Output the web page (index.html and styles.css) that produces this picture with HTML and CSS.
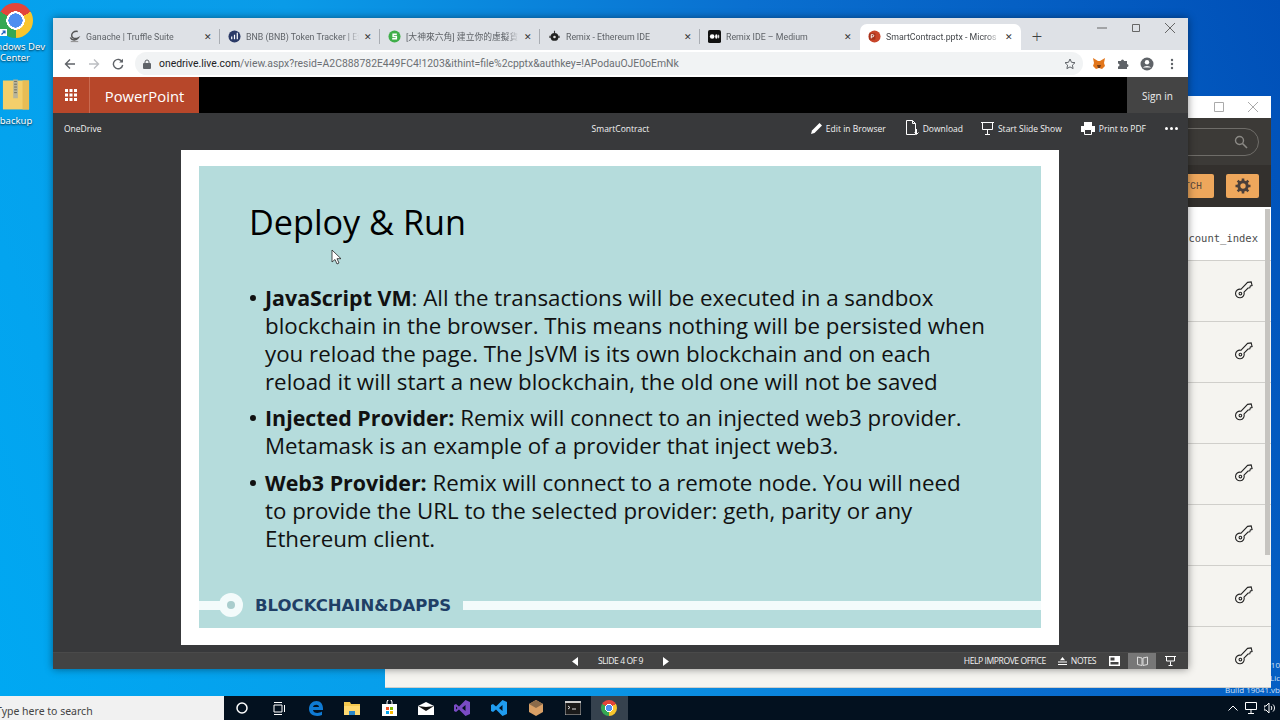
FILE: index.html
```html
<!DOCTYPE html>
<html>
<head>
    <title>SmartContract.pptx - Microsoft PowerPoint Online</title>
    <meta charset="utf-8">
    <link rel="stylesheet" href="styles.css">
</head>
<body>
    <div class="desktop">
        <div class="desk-icon chrome-desk">
            <div class="chrome-logo big"></div>
            <svg class="shortcut" width="7" height="7" viewBox="0 0 7 7"><path d="M0 0h7v7H0z" fill="#fff"/><path d="M1.500 5.500L5 2M2.500 2H5v2.500" fill="none" stroke="#1b5fc0" stroke-width="1.200"/></svg>
            <span>Windows Dev<br>Center</span>
        </div>
        <div class="desk-icon zip-desk">
            <svg width="28" height="33" viewBox="0 0 30 34"><path d="M1 2h28v31H1z" fill="#f3cf6b"/><path d="M22 2h7v31h-7z" fill="#e8bd55"/><path d="M12 1h5v20h-5z" fill="#b8b49a"/><path d="M13 3h3M13 6h3M13 9h3M13 12h3M13 15h3" stroke="#6f6a55"/></svg>
            <span>backup</span>
        </div>
        <div class="build-note"><span>10</span><span>Lic</span><span>Build 19041.vb</span></div>

        <div class="back-window">
            <div class="back-title">
                <svg width="10" height="10" viewBox="0 0 10 10"><path d="M.5.5h9v9h-9z" fill="none" stroke="#aaa"/></svg>
                <svg width="10" height="10" viewBox="0 0 10 10"><path d="M0 0l10 10M10 0L0 10" stroke="#aaa"/></svg>
            </div>
            <div class="back-search">
                <div class="search-pill">
                    <svg width="14" height="14" viewBox="0 0 14 14"><circle cx="5.5" cy="5.5" r="4" fill="none" stroke="#8b8985" stroke-width="1.4"/><path d="M8.5 8.5L13 13" stroke="#8b8985" stroke-width="1.6"/></svg>
                </div>
            </div>
            <div class="back-actions">
                <div class="orange-btn switch-btn">SWITCH</div>
                <div class="orange-btn gear-btn">
                    <svg width="16" height="16" viewBox="0 0 16 16"><circle cx="8" cy="8" r="4.2" fill="none" stroke="#4a3f3a" stroke-width="3"/><path d="M8 .5v3M8 12.5v3M.5 8h3M12.5 8h3M2.7 2.7l2.1 2.1M11.2 11.2l2.1 2.1M13.3 2.7l-2.1 2.1M4.8 11.2l-2.1 2.1" stroke="#4a3f3a" stroke-width="2.6"/></svg>
                </div>
            </div>
            <div class="account-list">
                <div class="account-head">account_index</div>
                <div class="account-row"><svg class="key"><use href="#key"/></svg></div>
                <div class="account-row"><svg class="key"><use href="#key"/></svg></div>
                <div class="account-row"><svg class="key"><use href="#key"/></svg></div>
                <div class="account-row"><svg class="key"><use href="#key"/></svg></div>
                <div class="account-row"><svg class="key"><use href="#key"/></svg></div>
                <div class="account-row"><svg class="key"><use href="#key"/></svg></div>
                <div class="account-row"><svg class="key"><use href="#key"/></svg></div>
                <div class="scroll-thumb"></div>
            </div>
        </div>

        <div class="browser">
            <div class="tabstrip">
                <div class="tab">
                    <svg class="fav" viewBox="0 0 14 14"><path d="M10.500 1.500C6 1 3.500 3.500 4 6.500c.5 2.500 4 3.500 7 2-2 3-7 3-8.500-.5" fill="none" stroke="#555" stroke-width="1.600"/><path d="M3 12.500h8" stroke="#888"/></svg>
                    <span class="tab-name">Ganache | Truffle Suite</span><span class="tab-x">✕</span>
                </div>
                <div class="tab">
                    <svg class="fav" viewBox="0 0 14 14"><circle cx="7" cy="7" r="6.500" fill="#2b3a67"/><path d="M4 10V7M7 10V5M10 10V3" fill="none" stroke="#fff" stroke-width="1.300"/></svg>
                    <span class="tab-name">BNB (BNB) Token Tracker | Et</span><span class="tab-x">✕</span>
                </div>
                <div class="tab">
                    <svg class="fav" viewBox="0 0 14 14"><circle cx="7" cy="7" r="6.500" fill="#3fae49"/><path d="M9.500 4.500H5.500v2.500h3.500v2.500H4.500" fill="none" stroke="#fff" stroke-width="1.600"/></svg>
                    <span class="tab-name cjk">[大神來六角] 建立你的虛擬貨</span><span class="tab-x">✕</span>
                </div>
                <div class="tab">
                    <svg class="fav" viewBox="0 0 14 14"><circle cx="7" cy="7.500" r="4.200" fill="#222"/><path d="M1.500 7.500h1.500M11 7.500h1.500" stroke="#333" stroke-width="2.400"/><path d="M7 .8v2.500" stroke="#333" stroke-width="1.200"/><circle cx="7" cy="7.500" r="1.400" fill="#ddd"/></svg>
                    <span class="tab-name">Remix - Ethereum IDE</span><span class="tab-x">✕</span>
                </div>
                <div class="tab">
                    <svg class="fav" viewBox="0 0 14 14"><rect width="14" height="14" rx="2" fill="#111"/><circle cx="4.500" cy="7" r="2.500" fill="#fff"/><ellipse cx="9" cy="7" rx="1.300" ry="2.400" fill="#fff"/><ellipse cx="11.500" cy="7" rx=".6" ry="2.100" fill="#fff"/></svg>
                    <span class="tab-name">Remix IDE – Medium</span><span class="tab-x">✕</span>
                </div>
                <div class="tab active">
                    <svg class="fav" viewBox="0 0 14 14"><circle cx="7" cy="7" r="6.500" fill="#c8452a"/><rect x="1" y="3.500" width="7" height="7" rx="1" fill="#a5311a"/><path d="M3.500 9V5h1.500a1.200 1.200 0 0 1 0 2.400H3.500" fill="none" stroke="#fff"/></svg>
                    <span class="tab-name">SmartContract.pptx - Micros</span><span class="tab-x">✕</span>
                </div>
                <div class="new-tab">+</div>
                <div class="win-controls">
                    <svg width="10" height="10" viewBox="0 0 10 10"><path d="M0 5h10" stroke="#666"/></svg>
                    <svg width="10" height="10" viewBox="0 0 10 10"><path d="M1.500 1.500h7v7h-7z" fill="none" stroke="#666"/></svg>
                    <svg width="10" height="10" viewBox="0 0 10 10"><path d="M0 0l10 10M10 0L0 10" stroke="#666"/></svg>
                </div>
            </div>

            <div class="toolbar">
                <svg class="nav" viewBox="0 0 12 12"><path d="M11 6H1.500M6 1.500L1.500 6 6 10.500" fill="none" stroke="#5f6368" stroke-width="1.400"/></svg>
                <svg class="nav" viewBox="0 0 12 12"><path d="M1 6h9.500M6 1.500L10.500 6 6 10.500" fill="none" stroke="#bcbec2" stroke-width="1.400"/></svg>
                <svg class="nav" viewBox="0 0 12 12"><path d="M10.300 4A4.700 4.700 0 1 0 10.700 7" fill="none" stroke="#5f6368" stroke-width="1.400"/><path d="M11 .8V4.600H7.200z" fill="#5f6368"/></svg>
                <div class="omnibox">
                    <svg width="8" height="10" viewBox="0 0 8 10"><rect y="4" width="8" height="6" rx="1" fill="#5f6368"/><path d="M2 4.500V3a2 2 0 0 1 4 0v1.500" fill="none" stroke="#5f6368"/></svg>
                    <span class="url"><b>onedrive.live.com</b>/view.aspx?resid=A2C888782E449FC4!1203&amp;ithint=file%2cpptx&amp;authkey=!APodauOJE0oEmNk</span>
                    <svg class="star" width="12" height="12" viewBox="0 0 12 12"><path d="M6 1l1.500 3.300 3.500.4-2.600 2.400.7 3.500L6 8.900l-3.100 1.700.7-3.500L1 4.700l3.500-.4z" fill="none" stroke="#5f6368"/></svg>
                </div>
                <div class="ext-icons">
                    <svg width="14" height="14" viewBox="0 0 14 14"><path d="M1 1l5 3h2l5-3-1 5 1 3-3 3-3-1-3 1-3-3 1-3z" fill="#e2761b"/><path d="M5 8h4l-1 3H6z" fill="#763d16"/></svg>
                    <svg width="12" height="12" viewBox="0 0 12 12"><path d="M1 3h3a1.500 1.500 0 0 1 3 0h3v3a1.500 1.500 0 0 1 0 3v2H1V8.500a1.500 1.500 0 0 0 0-3z" fill="#5f6368"/></svg>
                    <svg width="14" height="14" viewBox="0 0 14 14"><circle cx="7" cy="7" r="6.500" fill="#5f6368"/><circle cx="7" cy="5.200" r="2.200" fill="#fff"/><path d="M2.800 10.500a5 3.500 0 0 1 8.400 0z" fill="#fff"/></svg>
                    <svg class="ext-menu" width="4" height="12" viewBox="0 0 4 12"><circle cx="2" cy="2" r="1.200" fill="#5f6368"/><circle cx="2" cy="6" r="1.200" fill="#5f6368"/><circle cx="2" cy="10" r="1.200" fill="#5f6368"/></svg>
                </div>
            </div>

            <div class="app-bar">
                <div class="brand">
                    <div class="waffle">
                        <svg width="12" height="12" viewBox="0 0 12 12"><path fill="#fff" d="M0 0h3v3H0zM4.500 0h3v3h-3zM9 0h3v3H9zM0 4.500h3v3H0zM4.500 4.500h3v3h-3zM9 4.500h3v3H9zM0 9h3v3H0zM4.500 9h3v3h-3zM9 9h3v3H9z"/></svg>
                    </div>
                    <div class="brand-name">PowerPoint</div>
                </div>
                <div class="sign-in">Sign in</div>
            </div>

            <div class="command-bar">
                <div class="cmd-left">OneDrive</div>
                <div class="cmd-title">SmartContract</div>
                <div class="cmd-right">
                    <span class="cmd edit"><svg width="11" height="11" viewBox="0 0 11 11"><path d="M0 11l1-3.500L8.500 0 11 2.500 3.500 10z" fill="#fff"/></svg>Edit in Browser</span>
                    <span class="cmd dl"><svg width="13" height="16" viewBox="0 0 13 16"><path d="M.5.5h6l3 3v11h-9zM6.500.5v3h3" fill="none" stroke="#fff"/><path d="M10.500 9v5M8.500 12.500l2 2 2-2" fill="none" stroke="#fff"/></svg>Download</span>
                    <span class="cmd show"><svg width="13" height="13" viewBox="0 0 13 13"><path d="M0 .5h13M1.500 1v6.500h10V1M6.500 8v4M4 12.500h5" fill="none" stroke="#fff"/></svg>Start Slide Show</span>
                    <span class="cmd pdf"><svg width="14" height="13" viewBox="0 0 14 13"><path d="M3 0h8v4H3zM0 4h14v6H0z" fill="#fff"/><path d="M3.500 7.500h7v5h-7z" fill="#38393b" stroke="#fff"/></svg>Print to PDF</span>
                    <span class="dots"><i></i><i></i><i></i></span>
                </div>
            </div>

            <div class="stage">
                <div class="slide">
                    <div class="slide-inner">
                        <h1>Deploy &amp; Run</h1>
                        <ul>
                            <li><b>JavaScript VM</b>: All the transactions will be executed in a sandbox<br>blockchain in the browser. This means nothing will be persisted when<br>you reload the page. The JsVM is its own blockchain and on each<br>reload it will start a new blockchain, the old one will not be saved</li>
                            <li><b>Injected Provider:</b> Remix will connect to an injected web3 provider.<br>Metamask is an example of a provider that inject web3.</li>
                            <li><b>Web3 Provider:</b> Remix will connect to a remote node. You will need<br>to provide the URL to the selected provider: geth, parity or any<br>Ethereum client.</li>
                        </ul>
                        <div class="slide-foot">
                            <div class="foot-line short"></div>
                            <div class="foot-dot"><i></i></div>
                            <div class="foot-name">BLOCKCHAIN&amp;DAPPS</div>
                            <div class="foot-line long"></div>
                        </div>
                    </div>
                </div>
                <svg class="cursor" width="11" height="16" viewBox="0 0 11 16"><path d="M1 1v12l3-2.500 2 4.500 2-1-2-4.300h4z" fill="#fff" stroke="#222" stroke-width=".8"/></svg>
            </div>

            <div class="status-bar">
                <div></div>
                <div class="pager">
                    <svg width="6" height="9" viewBox="0 0 6 9"><path d="M6 0v9L0 4.500z" fill="#fff"/></svg>
                    <span>SLIDE 4 OF 9</span>
                    <svg width="6" height="9" viewBox="0 0 6 9"><path d="M0 0v9l6-4.500z" fill="#fff"/></svg>
                </div>
                <div class="status-right">
                    <span class="help">HELP IMPROVE OFFICE</span>
                    <svg class="notes-ico" width="9" height="9" viewBox="0 0 9 9"><path d="M4.500 0L7 3.200H2z" fill="#fff"/><path d="M0 5h9M0 7.500h9" stroke="#fff"/></svg>
                    <span class="notes">NOTES</span>
                    <span class="view"><svg width="11" height="10" viewBox="0 0 11 10"><path d="M0 0h11v10H0z" fill="#fff"/><path d="M1.500 1.500h4v3h-4zM1.500 6h8v2.500h-8z" fill="#434343"/></svg></span>
                    <span class="view on"><svg width="11" height="10" viewBox="0 0 11 10"><path d="M.5 1l4.500 1v7.500L.5 8.500zM10.500 1L6 2v7.500l4.500-1z" fill="none" stroke="#ddd"/></svg></span>
                    <span class="view"><svg width="11" height="10" viewBox="0 0 11 10"><path d="M0 .5h11M1.500 1v4h8V1M5.500 5.500v3.500M3.500 9.500h4" fill="none" stroke="#fff"/></svg></span>
                </div>
            </div>
        </div>
    </div>

    <div class="taskbar">
        <div class="task-search">Type here to search</div>
        <div class="task-icons">
            <span class="task-ico"><svg width="12" height="12" viewBox="0 0 12 12"><circle cx="6" cy="6" r="5" fill="none" stroke="#fff" stroke-width="1.500"/></svg></span>
            <span class="task-ico"><svg width="13" height="13" viewBox="0 0 13 13"><path d="M1 .5h8M1 12.500h8M1 3h8v7H1zM11.500 3v7" fill="none" stroke="#fff"/></svg></span>
            <span class="task-ico"><svg width="16" height="16" viewBox="0 0 16 16"><path d="M15 10H5c.3 3 5 4 9 1.500V15c-6 2.500-13 0-13-6 0-5 3.500-8 7.500-8S15 4 15 8.500zM5 7h6c0-3-5.500-3-6 0z" fill="#0f7bd4" fill-rule="evenodd"/></svg></span>
            <span class="task-ico"><svg width="16" height="14" viewBox="0 0 16 14"><path d="M0 1h6l1 2h9v11H0z" fill="#f4c84f"/><path d="M0 5h16v9H0z" fill="#ffd970"/><path d="M5 10h6v4H5z" fill="#2b87c8"/></svg></span>
            <span class="task-ico"><svg width="15" height="16" viewBox="0 0 15 16"><path d="M0 4h15v12H0z" fill="#fff"/><path d="M5 4V2a2.500 2.500 0 0 1 5 0v2" fill="none" stroke="#fff"/><path d="M4 7h3v3H4z" fill="#f25022"/><path d="M8 7h3v3H8z" fill="#7fba00"/><path d="M4 11h3v3H4z" fill="#00a4ef"/><path d="M8 11h3v3H8z" fill="#ffb900"/></svg></span>
            <span class="task-ico"><svg width="16" height="13" viewBox="0 0 16 13"><path d="M0 4l8-4 8 4v9H0z" fill="#fff"/><path d="M0 4l8 5 8-5-8 1z" fill="#111"/></svg></span>
            <span class="task-ico"><svg width="16" height="16" viewBox="0 0 16 16"><path d="M11.500 0L16 2v12l-4.500 2L5 9.500 2 12l-2-1V5l2-1 3 2.500zM11.500 5L8 8l3.500 3zM2 6.500v3L3.500 8z" fill="#7a4bc4" fill-rule="evenodd"/></svg></span>
            <span class="task-ico"><svg width="16" height="16" viewBox="0 0 16 16"><path d="M11.500 0L16 2v12l-4.500 2L5 9.500 2 12l-2-1V5l2-1 3 2.500zM11.500 5L8 8l3.500 3z" fill="#1f9cf0" fill-rule="evenodd"/></svg></span>
            <span class="task-ico"><svg width="16" height="16" viewBox="0 0 16 16"><path d="M8 0l7 4v8l-7 4-7-4V4z" fill="#d9a066"/><path d="M1 4l7-4 7 4-7 4z" fill="#8a6a4a"/></svg></span>
            <span class="task-ico"><svg width="16" height="14" viewBox="0 0 16 14"><path d="M0 0h16v14H0z" fill="#1a1a1a" stroke="#bbb"/><path d="M0 0h16v2H0z" fill="#ccc"/><path d="M3 5l2 1.500L3 8M7 8h4" fill="none" stroke="#ddd"/></svg></span>
            <span class="task-ico active"><div class="chrome-logo"></div></span>
        </div>
        <div class="tray">
            <svg width="10" height="6" viewBox="0 0 10 6"><path d="M.5 5.500L5 1l4.500 4.500" fill="none" stroke="#fff"/></svg>
            <svg width="12" height="12" viewBox="0 0 12 12"><path d="M.5.500h11v7h-11zM6 8v3M3 11.500h6" fill="none" stroke="#fff"/></svg>
            <svg width="12" height="12" viewBox="0 0 12 12"><path d="M0 4h2l3-3v10L2 8H0z" fill="none" stroke="#fff"/><path d="M7 4c1 1 1 3 0 4M9 2.500c2 2 2 5 0 7" fill="none" stroke="#fff"/></svg>
        </div>
    </div>

    <svg width="0" height="0" class="defs">
        <symbol id="key" viewBox="0 0 20 20">
            <path d="M18 1l1 4-2 .5-.5 2-2 .3-4.500 4.700a4.800 4.800 0 1 1-3.500-3.300L14 1.500z" fill="none" stroke="#222" stroke-width="1.200"/>
            <circle cx="6" cy="14" r="1.500" fill="none" stroke="#222" stroke-width="1.200"/>
        </symbol>
    </svg>
</body>
</html>
```

FILE: styles.css
```css
html, body {
    margin: 0;
    padding: 0;
    width: 1280px;
    height: 720px;
    overflow: hidden;
    font-family: "Open Sans", sans-serif;
}
svg {
    display: block;
    flex: none;
}
.defs {
    position: absolute;
}

/* desktop */
.desktop {
    position: relative;
    height: 696px;
    overflow: hidden;
    background: linear-gradient(70deg, #00a8f2 0%, #0a9be8 35%, #0a70d0 65%, #0050b8 100%);
}
.desk-icon {
    position: absolute;
    color: white;
    font-family: "Noto Sans", sans-serif;
    font-size: 9.5px;
    line-height: 11px;
    text-align: center;
    text-shadow: 0 1px 2px rgba(0, 0, 0, 0.8);
    display: flex;
    flex-direction: column;
    align-items: center;
    gap: 3px;
}
.chrome-desk {
    left: -15px;
    top: 3px;
    width: 60px;
}
.shortcut {
    position: absolute;
    left: 15px;
    top: 26px;
}
.zip-desk {
    left: 2px;
    top: 78px;
    width: 28px;
    gap: 4px;
}
.chrome-logo {
    width: 16px;
    height: 16px;
    border-radius: 50%;
    background:
        radial-gradient(circle closest-side, #4e8ff0 0 40%, white 41% 52%, transparent 53%),
        conic-gradient(from -60deg, #e2453a 0 120deg, #f8c52d 120deg 240deg, #35a853 240deg 360deg);
}
.chrome-logo.big {
    width: 35px;
    height: 35px;
}
.build-note {
    position: absolute;
    right: 0;
    top: 659px;
    display: flex;
    flex-direction: column;
    align-items: flex-end;
    color: #cfe0f5;
    font-size: 8px;
    line-height: 12.500px;
    white-space: nowrap;
}

/* window behind the browser */
.back-window {
    position: absolute;
    left: 385px;
    top: 96px;
    width: 886px;
    height: 592px;
    background: #f5f4f0;
    display: flex;
    flex-direction: column;
}
.back-title {
    height: 22px;
    background: white;
    display: flex;
    justify-content: flex-end;
    align-items: center;
    gap: 24px;
    padding-right: 13px;
}
.back-search {
    height: 47px;
    background: #3c3a37;
    display: flex;
    justify-content: flex-end;
    align-items: center;
    padding-right: 12px;
}
.search-pill {
    width: 160px;
    height: 26px;
    border: 1px solid #6f6d69;
    border-radius: 14px;
    display: flex;
    justify-content: flex-end;
    align-items: center;
    padding-right: 10px;
}
.back-actions {
    height: 42px;
    background: #33302d;
    display: flex;
    justify-content: flex-end;
    align-items: center;
    gap: 12px;
    padding-right: 12px;
}
.orange-btn {
    height: 24px;
    border-radius: 2px;
    background: #eea75c;
    color: #5b4a3c;
    font-family: "Liberation Mono", monospace;
    font-size: 10px;
    display: flex;
    align-items: center;
    justify-content: center;
}
.switch-btn {
    width: 60px;
}
.gear-btn {
    width: 33px;
}
.account-list {
    position: relative;
    flex: 1;
}
.account-head {
    height: 53px;
    background: white;
    border-bottom: 1px solid #d0cfcb;
    padding-right: 13px;
    text-align: right;
    color: #4b4b4b;
    font-family: "DejaVu Sans Mono", monospace;
    font-size: 10.500px;
    line-height: 62px;
}
.account-row {
    height: 60px;
    border-bottom: 1px solid #d0cfcb;
    display: flex;
    justify-content: flex-end;
    align-items: center;
    padding-right: 18px;
}
.account-row:last-of-type {
    border-bottom: none;
}
.key {
    width: 18px;
    height: 18px;
    margin-top: -2px;
}
.scroll-thumb {
    position: absolute;
    right: 1px;
    top: 2px;
    width: 5px;
    height: 346px;
    background: #c6c4c0;
}

/* browser */
.browser {
    position: absolute;
    left: 53px;
    top: 18px;
    width: 1135px;
    height: 651px;
    display: flex;
    flex-direction: column;
    box-shadow: 0 0 8px rgba(0, 0, 0, 0.45);
}
.tabstrip {
    height: 32px;
    background: #dee1e6;
    display: flex;
    align-items: flex-end;
    padding-left: 7px;
    position: relative;
    flex: none;
}
.tab {
    width: 160px;
    height: 26px;
    box-sizing: border-box;
    display: flex;
    align-items: center;
    gap: 5px;
    padding: 0 6px 1px 8px;
    font-family: "Roboto", "Noto Sans CJK TC", sans-serif;
    font-size: 8.800px;
    color: #5f6368;
    position: relative;
}
.tab:not(.active):not(:nth-child(5))::after {
    content: "";
    position: absolute;
    right: 0;
    top: 5px;
    height: 15px;
    width: 1px;
    background: #a9adb3;
}
.tab.active {
    background: white;
    border-radius: 7px 7px 0 0;
    color: #45484c;
    width: 161px;
}
.fav {
    width: 13px;
    height: 13px;
    flex: none;
}
.tab-name {
    flex: 1;
    overflow: hidden;
    white-space: nowrap;
    -webkit-mask-image: linear-gradient(90deg, black 88%, transparent);
}
.tab-x {
    font-size: 9px;
    font-weight: 700;
    color: #333;
    font-family: "DejaVu Sans", sans-serif;
    width: 10px;
}
.new-tab {
    font-size: 19px;
    font-weight: 300;
    color: #3c4043;
    width: 32px;
    text-align: center;
    line-height: 24px;
    height: 26px;
}
.win-controls {
    position: absolute;
    right: 13px;
    top: 5px;
    display: flex;
    gap: 24px;
}
.toolbar {
    height: 27px;
    background: white;
    display: flex;
    align-items: center;
    flex: none;
    padding-left: 11px;
    gap: 12px;
}
.nav {
    width: 12px;
    height: 12px;
}
.omnibox {
    width: 948px;
    height: 23px;
    margin-left: -1px;
    border-radius: 12px;
    background: #f1f3f4;
    display: flex;
    align-items: center;
    padding: 0 7px 0 8px;
    gap: 8px;
    box-sizing: border-box;
}
.url {
    flex: 1;
    font-family: "Roboto", sans-serif;
    font-size: 10.400px;
    color: #6b6f73;
    white-space: nowrap;
}
.url b {
    font-weight: 400;
    color: #202124;
}
.ext-icons {
    display: flex;
    align-items: center;
    gap: 11px;
    margin-left: -3px;
}
.ext-menu {
    margin-left: 5px;
}
.app-bar {
    height: 36px;
    background: black;
    display: flex;
    justify-content: space-between;
    flex: none;
}
.brand {
    background: #b7472a;
    width: 146px;
    display: flex;
    color: white;
}
.waffle {
    width: 36px;
    display: flex;
    align-items: center;
    justify-content: center;
    border-right: 1px solid #c96a50;
}
.brand-name {
    flex: 1;
    text-align: center;
    font-size: 14.800px;
    line-height: 38px;
}
.sign-in {
    width: 61px;
    background: #444;
    color: #eee;
    font-size: 10px;
    line-height: 38px;
    text-align: center;
}
.command-bar {
    height: 30px;
    background: #38393b;
    display: grid;
    grid-template-columns: 1fr auto 1fr;
    align-items: center;
    color: #f2f2f2;
    font-size: 8.500px;
    flex: none;
    padding: 0 11px;
}
.cmd-right {
    display: flex;
    justify-content: flex-end;
    align-items: center;
}
.cmd {
    display: flex;
    align-items: center;
    gap: 4px;
}
.edit {
    margin-right: 20px;
}
.dl {
    margin-right: 18px;
}
.show {
    margin-right: 19px;
}
.dots {
    display: flex;
    gap: 2px;
    margin-left: 19px;
    margin-right: -1px;
}
.dots i {
    width: 3px;
    height: 3px;
    border-radius: 50%;
    background: white;
}
.stage {
    flex: 1;
    background: #38393b;
    display: flex;
    align-items: flex-start;
    padding: 7px 0 0 128px;
    border-bottom: 1px solid #4a4a4a;
    position: relative;
}
.cursor {
    position: absolute;
    left: 278px;
    top: 106px;
}

/* slide */
.slide {
    width: 878px;
    height: 495px;
    box-sizing: border-box;
    background: white;
    padding: 16px 18px 17px;
}
.slide-inner {
    height: 100%;
    background: #b5dcdc;
    box-sizing: border-box;
    padding: 32px 0 0 50px;
    color: #111;
    position: relative;
}
.slide h1 {
    margin: 0;
    font-size: 34.200px;
    font-weight: 400;
    line-height: 48px;
    color: #000;
}
.slide ul {
    list-style: none;
    margin: 38px 0 0;
    padding: 0 0 0 16px;
    font-size: 22.300px;
    line-height: 28px;
}
.slide li {
    margin-bottom: 8.400px;
    white-space: nowrap;
    position: relative;
}
.slide li b {
    font-size: 21.400px;
}
.slide li::before {
    content: "";
    position: absolute;
    left: -15px;
    top: 11px;
    width: 6px;
    height: 6px;
    border-radius: 50%;
    background: #111;
}
.slide-foot {
    position: absolute;
    left: 0;
    right: 0;
    top: 423px;
    height: 32px;
    display: flex;
    align-items: center;
}
.foot-line {
    height: 9px;
    background: #f3fbfb;
}
.foot-line.short {
    width: 21px;
}
.foot-line.long {
    flex: 1;
}
.foot-dot {
    width: 24px;
    height: 24px;
    border-radius: 50%;
    background: #f3fbfb;
    margin-left: -1px;
    display: flex;
    align-items: center;
    justify-content: center;
}
.foot-dot i {
    width: 8px;
    height: 8px;
    border-radius: 50%;
    background: #a9cdcd;
}
.foot-name {
    margin-left: 12px;
    width: 208px;
    color: #1f3f66;
    font-family: "DejaVu Sans", sans-serif;
    font-size: 16.500px;
    line-height: 20px;
    padding-top: 2px;
    font-weight: 700;
    white-space: nowrap;
}

/* status bar */
.status-bar {
    height: 16px;
    background: #434343;
    display: grid;
    grid-template-columns: 1fr auto 1fr;
    align-items: center;
    color: #f2f2f2;
    font-size: 8.600px;
    letter-spacing: -0.45px;
    flex: none;
}
.pager {
    display: flex;
    align-items: center;
    gap: 20px;
}
.status-right {
    display: flex;
    justify-content: flex-end;
    align-items: center;
    height: 100%;
    padding-right: 4px;
}
.help {
    margin-right: 12px;
}
.notes-ico {
    margin-right: 4px;
}
.notes {
    margin-right: 4px;
}
.view {
    width: 28px;
    height: 100%;
    display: flex;
    align-items: center;
    justify-content: center;
}
.view.on {
    background: #777;
}

/* taskbar */
.taskbar {
    height: 24px;
    background: #03111f;
    display: flex;
    align-items: center;
}
.task-search {
    width: 224px;
    height: 100%;
    box-sizing: border-box;
    background: #f1f1f1;
    color: #444;
    font-family: "Noto Sans", sans-serif;
    font-size: 10.500px;
    line-height: 31px;
    text-indent: -4px;
    overflow: hidden;
}
.task-icons {
    display: flex;
    height: 100%;
}
.task-ico {
    width: 36.700px;
    height: 100%;
    display: flex;
    align-items: center;
    justify-content: center;
    overflow: hidden;
}
.task-ico.active {
    background: #36424e;
}
.tray {
    margin-left: auto;
    display: flex;
    align-items: center;
    gap: 7px;
    margin-right: 4px;
}
```
